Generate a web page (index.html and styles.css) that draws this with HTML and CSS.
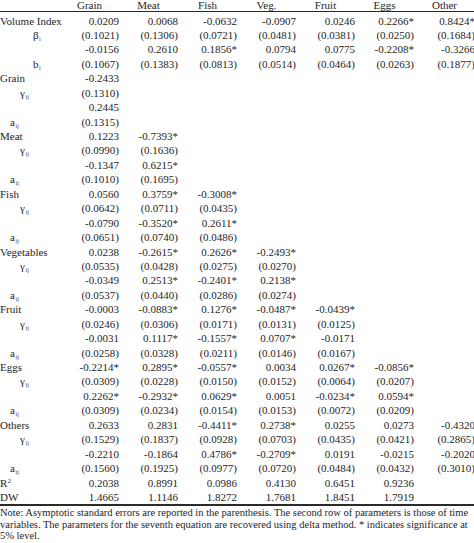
FILE: index.html
```html
<!DOCTYPE html>
<html lang="en">
<head>
<meta charset="utf-8">
<title>Estimation results</title>
<link rel="stylesheet" href="styles.css">
</head>
<body>
<div class="page">
<table class="results">
  <colgroup>
    <col class="c-label"><col class="c-num"><col class="c-num"><col class="c-num"><col class="c-num"><col class="c-num"><col class="c-num"><col class="c-last">
  </colgroup>
  <thead>
    <tr><th></th><th>Grain</th><th>Meat</th><th>Fish</th><th>Veg.</th><th>Fruit</th><th>Eggs</th><th>Other</th></tr>
  </thead>
  <tbody>
    <tr class="first"><td class="lbl">Volume Index</td><td>0.0209</td><td>0.0068</td><td>-0.0632</td><td>-0.0907</td><td>0.0246</td><td>0.2266*</td><td>0.8424*</td></tr>
    <tr><td class="lbl sub1">β<sub>i</sub></td><td>(0.1021)</td><td>(0.1306)</td><td>(0.0721)</td><td>(0.0481)</td><td>(0.0381)</td><td>(0.0250)</td><td>(0.1684)</td></tr>
    <tr><td class="lbl"></td><td>-0.0156</td><td>0.2610</td><td>0.1856*</td><td>0.0794</td><td>0.0775</td><td>-0.2208*</td><td>-0.3266</td></tr>
    <tr><td class="lbl sub1">b<sub>i</sub></td><td>(0.1067)</td><td>(0.1383)</td><td>(0.0813)</td><td>(0.0514)</td><td>(0.0464)</td><td>(0.0263)</td><td>(0.1877)</td></tr>

    <tr><td class="lbl">Grain</td><td>-0.2433</td><td></td><td></td><td></td><td></td><td></td><td></td></tr>
    <tr><td class="lbl sub2">γ<sub>ij</sub></td><td>(0.1310)</td><td></td><td></td><td></td><td></td><td></td><td></td></tr>
    <tr><td class="lbl"></td><td>0.2445</td><td></td><td></td><td></td><td></td><td></td><td></td></tr>
    <tr><td class="lbl sub3">a<sub>ij</sub></td><td>(0.1315)</td><td></td><td></td><td></td><td></td><td></td><td></td></tr>

    <tr><td class="lbl">Meat</td><td>0.1223</td><td>-0.7393*</td><td></td><td></td><td></td><td></td><td></td></tr>
    <tr><td class="lbl sub2">γ<sub>ij</sub></td><td>(0.0990)</td><td>(0.1636)</td><td></td><td></td><td></td><td></td><td></td></tr>
    <tr><td class="lbl"></td><td>-0.1347</td><td>0.6215*</td><td></td><td></td><td></td><td></td><td></td></tr>
    <tr><td class="lbl sub3">a<sub>ij</sub></td><td>(0.1010)</td><td>(0.1695)</td><td></td><td></td><td></td><td></td><td></td></tr>

    <tr><td class="lbl">Fish</td><td>0.0560</td><td>0.3759*</td><td>-0.3008*</td><td></td><td></td><td></td><td></td></tr>
    <tr><td class="lbl sub2">γ<sub>ij</sub></td><td>(0.0642)</td><td>(0.0711)</td><td>(0.0435)</td><td></td><td></td><td></td><td></td></tr>
    <tr><td class="lbl"></td><td>-0.0790</td><td>-0.3520*</td><td>0.2611*</td><td></td><td></td><td></td><td></td></tr>
    <tr><td class="lbl sub3">a<sub>ij</sub></td><td>(0.0651)</td><td>(0.0740)</td><td>(0.0486)</td><td></td><td></td><td></td><td></td></tr>

    <tr><td class="lbl">Vegetables</td><td>0.0238</td><td>-0.2615*</td><td>0.2626*</td><td>-0.2493*</td><td></td><td></td><td></td></tr>
    <tr><td class="lbl sub2">γ<sub>ij</sub></td><td>(0.0535)</td><td>(0.0428)</td><td>(0.0275)</td><td>(0.0270)</td><td></td><td></td><td></td></tr>
    <tr><td class="lbl"></td><td>-0.0349</td><td>0.2513*</td><td>-0.2401*</td><td>0.2138*</td><td></td><td></td><td></td></tr>
    <tr><td class="lbl sub3">a<sub>ij</sub></td><td>(0.0537)</td><td>(0.0440)</td><td>(0.0286)</td><td>(0.0274)</td><td></td><td></td><td></td></tr>

    <tr><td class="lbl">Fruit</td><td>-0.0003</td><td>-0.0883*</td><td>0.1276*</td><td>-0.0487*</td><td>-0.0439*</td><td></td><td></td></tr>
    <tr><td class="lbl sub2">γ<sub>ij</sub></td><td>(0.0246)</td><td>(0.0306)</td><td>(0.0171)</td><td>(0.0131)</td><td>(0.0125)</td><td></td><td></td></tr>
    <tr><td class="lbl"></td><td>-0.0031</td><td>0.1117*</td><td>-0.1557*</td><td>0.0707*</td><td>-0.0171</td><td></td><td></td></tr>
    <tr><td class="lbl sub3">a<sub>ij</sub></td><td>(0.0258)</td><td>(0.0328)</td><td>(0.0211)</td><td>(0.0146)</td><td>(0.0167)</td><td></td><td></td></tr>

    <tr><td class="lbl">Eggs</td><td>-0.2214*</td><td>0.2895*</td><td>-0.0557*</td><td>0.0034</td><td>0.0267*</td><td>-0.0856*</td><td></td></tr>
    <tr><td class="lbl sub2">γ<sub>ij</sub></td><td>(0.0309)</td><td>(0.0228)</td><td>(0.0150)</td><td>(0.0152)</td><td>(0.0064)</td><td>(0.0207)</td><td></td></tr>
    <tr><td class="lbl"></td><td>0.2262*</td><td>-0.2932*</td><td>0.0629*</td><td>0.0051</td><td>-0.0234*</td><td>0.0594*</td><td></td></tr>
    <tr><td class="lbl sub3">a<sub>ij</sub></td><td>(0.0309)</td><td>(0.0234)</td><td>(0.0154)</td><td>(0.0153)</td><td>(0.0072)</td><td>(0.0209)</td><td></td></tr>

    <tr><td class="lbl">Others</td><td>0.2633</td><td>0.2831</td><td>-0.4411*</td><td>0.2738*</td><td>0.0255</td><td>0.0273</td><td>-0.4320</td></tr>
    <tr><td class="lbl sub2">γ<sub>ij</sub></td><td>(0.1529)</td><td>(0.1837)</td><td>(0.0928)</td><td>(0.0703)</td><td>(0.0435)</td><td>(0.0421)</td><td>(0.2865)</td></tr>
    <tr><td class="lbl"></td><td>-0.2210</td><td>-0.1864</td><td>0.4786*</td><td>-0.2709*</td><td>0.0191</td><td>-0.0215</td><td>-0.2020</td></tr>
    <tr><td class="lbl sub3">a<sub>ij</sub></td><td>(0.1560)</td><td>(0.1925)</td><td>(0.0977)</td><td>(0.0720)</td><td>(0.0484)</td><td>(0.0432)</td><td>(0.3010)</td></tr>

    <tr><td class="lbl">R<sup>2</sup></td><td>0.2038</td><td>0.8991</td><td>0.0986</td><td>0.4130</td><td>0.6451</td><td>0.9236</td><td></td></tr>
    <tr class="last"><td class="lbl">DW</td><td>1.4665</td><td>1.1146</td><td>1.8272</td><td>1.7681</td><td>1.8451</td><td>1.7919</td><td></td></tr>
  </tbody>
</table>
<p class="note">Note: Asymptotic standard errors are reported in the parenthesis. The second row of parameters is those of time<br>variables. The parameters for the seventh equation are recovered using delta method. * indicates significance at<br>5% level.</p>
</div>
</body>
</html>
```
FILE: styles.css
```css
html, body {
  margin: 0;
  padding: 0;
  background: #ffffff;
}
body {
  overflow: hidden;
  font-family: "Liberation Serif", "Times New Roman", serif;
  font-size: 11px;
  color: #1e1e1e;
}
.page {
  width: 476px;
}
.results {
  border-collapse: separate;
  border-spacing: 0;
  table-layout: fixed;
  width: 475px;
}
.c-label { width: 60px; }
.c-num { width: 59px; }
.c-last { width: 61px; }

.results th {
  font-weight: normal;
  text-align: center;
  height: 10.5px;
  line-height: 10.5px;
  padding: 0;
  border-bottom: 1px solid #2a2a2a;
  white-space: nowrap;
}
.results td {
  padding: 0;
  height: 14.43px;
  line-height: 14.43px;
  text-align: right;
  white-space: nowrap;
}
.results tr.first td {
  padding-top: 2px;
}
.results tr.last td {
  border-bottom: 2px solid #2a2a2a;
}
.results td.lbl {
  text-align: left;
}
.results td.sub1 { padding-left: 33px; }
.results td.sub2 { padding-left: 20px; }
.results td.sub3 { padding-left: 10px; }

.results sub {
  font-size: 6.5px;
  line-height: 0;
  vertical-align: -2px;
  margin-left: 0.5px;
  color: #555;
}
.results sup {
  font-size: 6.5px;
  line-height: 0;
  vertical-align: 4px;
  margin-left: 0.5px;
}
.note {
  margin: 1px 0 0 0;
  font-size: 10.5px;
  line-height: 11.4px;
  white-space: nowrap;
}
```
